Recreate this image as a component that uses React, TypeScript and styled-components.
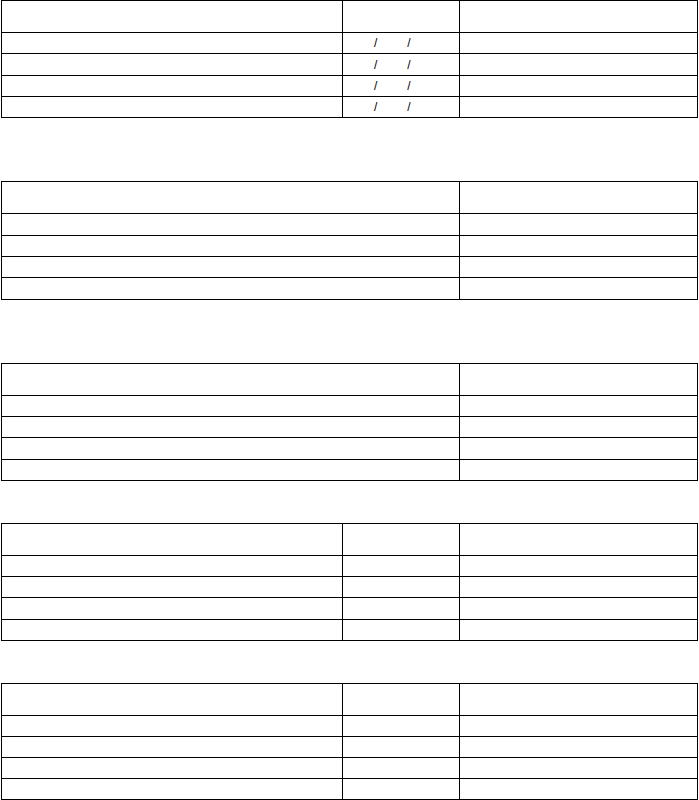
import React from 'react';
import styled, { createGlobalStyle } from 'styled-components';

const GlobalStyle = createGlobalStyle`
  html, body {
    margin: 0;
    padding: 0;
    background: #ffffff;
    font-family: "Liberation Sans", Arial, sans-serif;
  }
`;

const Page = styled.div`
  display: flex;
  flex-direction: column;
  padding-left: 1px;
  width: 697px;
`;

const Sheet = styled.div<{ $gap: number }>`
  box-sizing: border-box;
  width: 697px;
  margin-top: ${(p) => p.$gap}px;
  border-top: 1px solid #000;
  border-left: 1px solid #000;
`;

const Row = styled.div<{ $cols: string; $h: number }>`
  display: grid;
  grid-template-columns: ${(p) => p.$cols};
  height: ${(p) => p.$h}px;
`;

const Cell = styled.div`
  box-sizing: border-box;
  border-right: 1px solid #000;
  border-bottom: 1px solid #000;
`;

const DateCell = styled(Cell)`
  display: flex;
  align-items: center;
  gap: 30px;
  padding-left: 31px;
  font-size: 12px;
  line-height: 1;
  color: #000;
`;

const THREE = '341px 117px 238px';
const TWO = '458px 238px';

type Spec = {
  gap: number;
  cols: 'three' | 'two';
  dates?: boolean;
  heights: number[];
};

const tables: Spec[] = [
  { gap: 0, cols: 'three', dates: true, heights: [32, 21, 22, 21, 21] },
  { gap: 63, cols: 'two', heights: [32, 22, 21, 21, 22] },
  { gap: 63, cols: 'two', heights: [32, 21, 21, 22, 21] },
  { gap: 42, cols: 'three', heights: [32, 21, 21, 22, 21] },
  { gap: 42, cols: 'three', heights: [32, 21, 21, 21, 21] },
];

const FormTable = ({ spec }: { spec: Spec }) => {
  const cols = spec.cols === 'three' ? THREE : TWO;
  return (
    <Sheet $gap={spec.gap}>
      {spec.heights.map((h, i) => (
        <Row key={i} $cols={cols} $h={h}>
          <Cell />
          {spec.cols === 'three' &&
            (spec.dates && i > 0 ? (
              <DateCell>
                <span>/</span>
                <span>/</span>
              </DateCell>
            ) : (
              <Cell />
            ))}
          <Cell />
        </Row>
      ))}
    </Sheet>
  );
};

const App = () => {
  return (
    <>
      <GlobalStyle />
      <Page>
        {tables.map((t, i) => (
          <FormTable key={i} spec={t} />
        ))}
      </Page>
    </>
  );
};

export default App;
